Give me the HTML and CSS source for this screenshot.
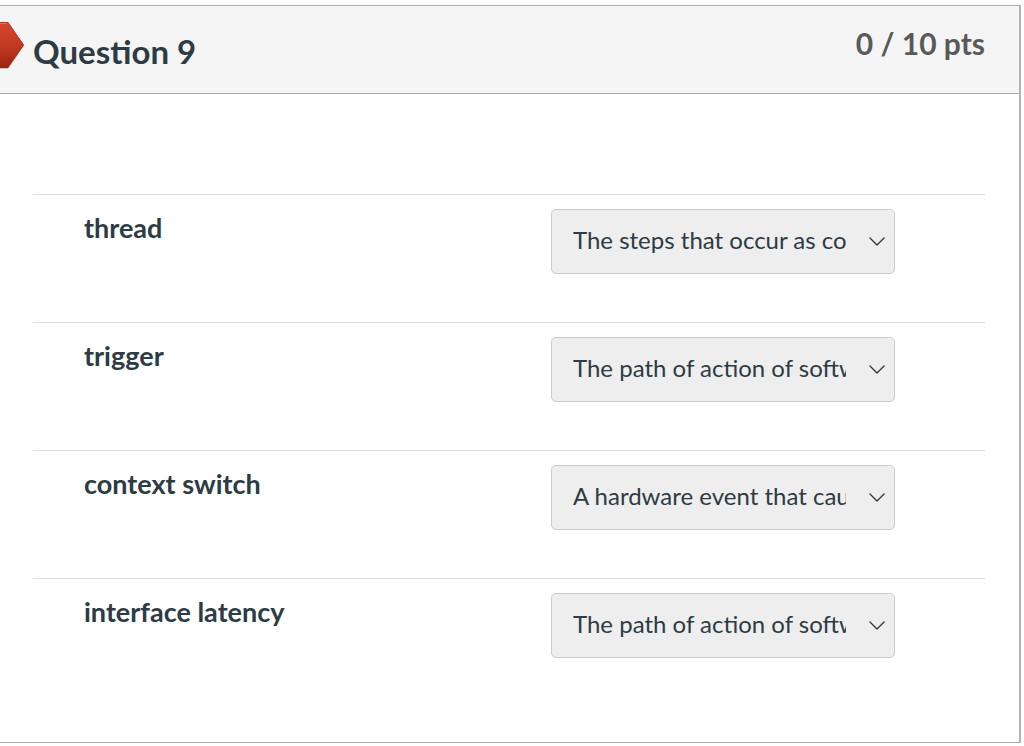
FILE: index.html
```html
<!DOCTYPE html>
<html lang="en">
<head>
    <meta charset="UTF-8">
    <meta name="viewport" content="width=device-width, initial-scale=1.0">
    <title>Question 9</title>
    <link rel="stylesheet" href="styles.css">
</head>
<body>
    <main class="question">
        <header class="header">
            <svg class="flag" width="26" height="50" viewBox="0 0 26 50" aria-hidden="true">
                <defs>
                    <linearGradient id="red" x1="0" y1="0" x2="0" y2="1">
                        <stop offset="0" stop-color="#d9452f"/>
                        <stop offset="0.5" stop-color="#c23a22"/>
                        <stop offset="1" stop-color="#9c2510"/>
                    </linearGradient>
                </defs>
                <path d="M0 0H8L24 23L8 46H0Z" fill="url(#red)"/>
                <path d="M0 0.500H8L23.500 23" fill="none" stroke="#b03a28"/>
                <path d="M0 1.500H7" stroke="#e0705f"/>
                <path d="M0 46H8L24 23" fill="none" stroke="#8c2a18" stroke-opacity="0.5"/>
            </svg>
            <h1 class="title">Question 9</h1>
            <div class="points">0 / 10 pts</div>
        </header>
        <div class="answers">
            <div class="answer">
                <label class="term" for="thread">thread</label>
                <div class="pick">
                    <select id="thread" disabled>
                        <option>The steps that occur as control moves between threads</option>
                    </select>
                    <svg class="arrow" width="18" height="12" viewBox="0 0 18 12" aria-hidden="true"><path d="M1.500 1.500L9 9L16.500 1.500"/></svg>
                </div>
            </div>
            <div class="answer">
                <label class="term" for="trigger">trigger</label>
                <div class="pick">
                    <select id="trigger" disabled>
                        <option>The path of action of software as it executes</option>
                    </select>
                    <svg class="arrow" width="18" height="12" viewBox="0 0 18 12" aria-hidden="true"><path d="M1.500 1.500L9 9L16.500 1.500"/></svg>
                </div>
            </div>
            <div class="answer">
                <label class="term" for="switch">context switch</label>
                <div class="pick">
                    <select id="switch" disabled>
                        <option>A hardware event that causes software to run</option>
                    </select>
                    <svg class="arrow" width="18" height="12" viewBox="0 0 18 12" aria-hidden="true"><path d="M1.500 1.500L9 9L16.500 1.500"/></svg>
                </div>
            </div>
            <div class="answer">
                <label class="term" for="latency">interface latency</label>
                <div class="pick">
                    <select id="latency" disabled>
                        <option>The path of action of software as it executes</option>
                    </select>
                    <svg class="arrow" width="18" height="12" viewBox="0 0 18 12" aria-hidden="true"><path d="M1.500 1.500L9 9L16.500 1.500"/></svg>
                </div>
            </div>
        </div>
    </main>
</body>
</html>
```
FILE: styles.css
```css
body {
    margin: 0;
    padding: 5px 3px 0 0;
    background: #fff;
    color: #2d3b45;
    font-family: Lato, sans-serif;
}

.question {
    border: 1px solid #aaa;
    border-left: none;
    border-right: 2px solid #b4b4b4;
}

.header {
    display: flex;
    align-items: flex-start;
    padding: 16px 34px 21px 0;
    background: #f5f5f5;
    border-bottom: 1px solid #aaa;
}

.flag {
    display: block;
    margin-right: 7px;
}

.title {
    flex: 1;
    margin: 0;
    padding-top: 9px;
    font-size: 33px;
    line-height: 40px;
    font-weight: bold;
}

.points {
    padding-top: 3px;
    color: #595959;
    font-size: 30px;
    line-height: 36px;
    font-weight: bold;
}

.answers {
    padding: 100px 34px 36px 33px;
}

.answer {
    display: flex;
    align-items: flex-start;
    padding: 14px 90px 48px 51px;
    border-top: 1px solid #ddd;
}

.term {
    flex: 1;
    padding-top: 2px;
    font-size: 27px;
    line-height: 34px;
    font-weight: bold;
}

.pick {
    position: relative;
    width: 344px;
}

select {
    display: block;
    width: 100%;
    height: 65px;
    padding: 0 48px 4px 21px;
    appearance: none;
    background: #eee;
    border: 1px solid #c7cdd1;
    border-radius: 5px;
    color: #2d3b45;
    font-family: Lato, sans-serif;
    font-size: 24px;
    opacity: 1;
}

.arrow {
    position: absolute;
    top: 27px;
    right: 9px;
    fill: none;
    stroke: #2d3b45;
    stroke-width: 1.3;
    pointer-events: none;
}
```
